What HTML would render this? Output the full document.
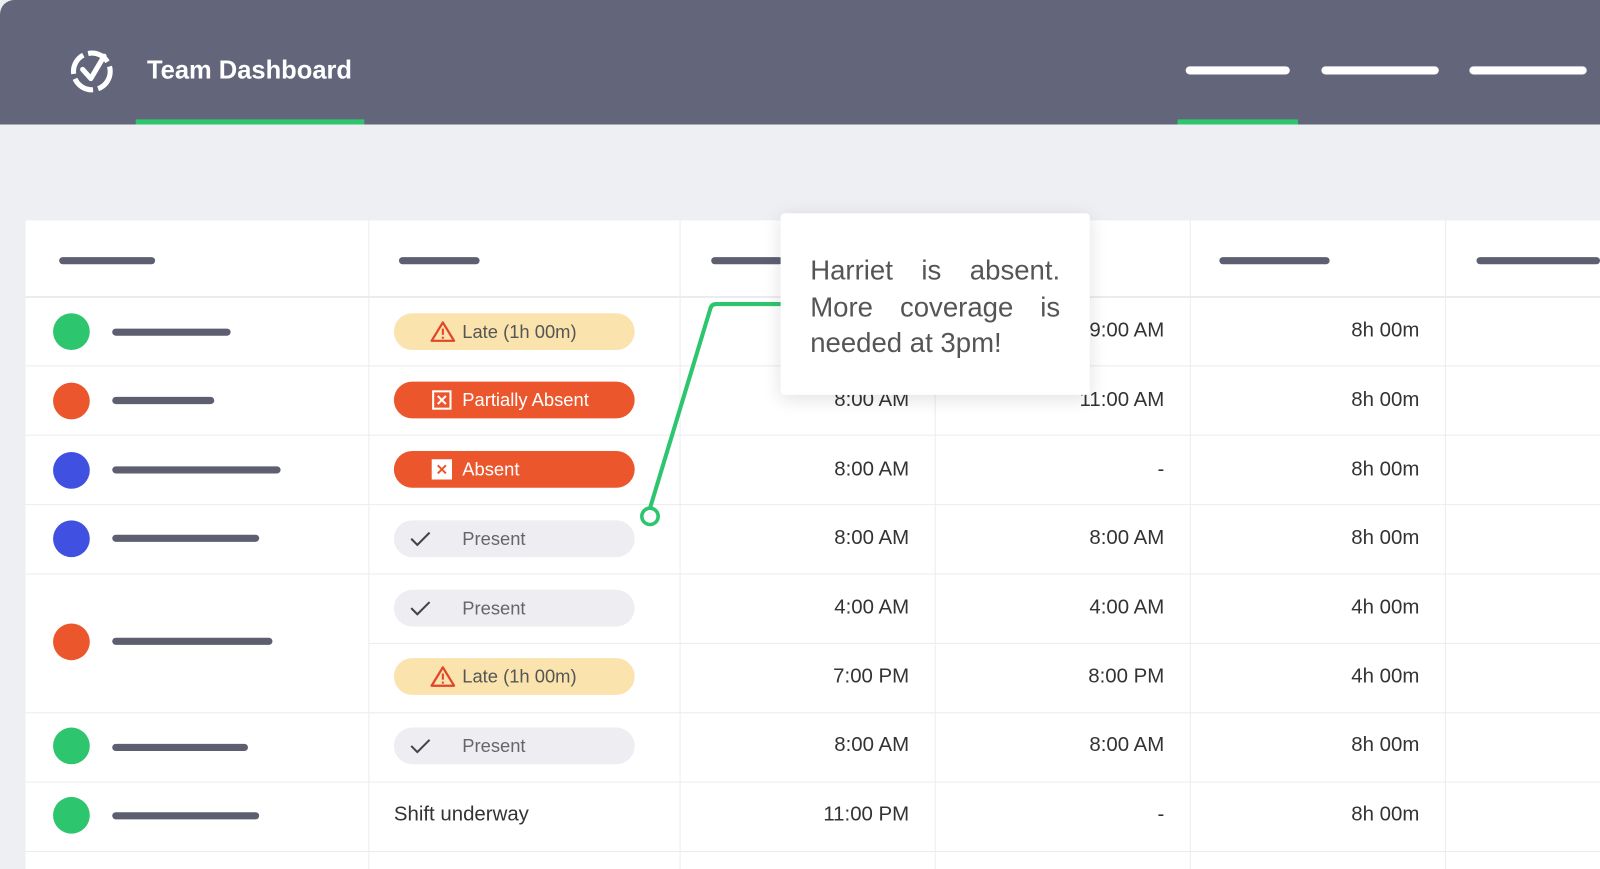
<!DOCTYPE html>
<html><head><meta charset="utf-8"><style>
*{margin:0;padding:0;box-sizing:border-box}
body{width:1600px;height:852px;overflow:hidden;background:#eeeff3;font-family:"Liberation Sans",sans-serif;position:relative}
#w{position:absolute;left:0;top:0;width:1568px;height:835px;transform:scale(1.0204);transform-origin:0 0}
.a{position:absolute}
.hdr{left:0;top:0;width:1600px;height:122px;background:#63657a;border-top-left-radius:14px}
.bar{position:absolute;height:8px;border-radius:4px;background:#fff}
.tb{left:25px;top:216px;width:1575px;height:636px;background:#fff}
.vl{position:absolute;width:1px;background:#ececef}
.hl{position:absolute;height:1px;background:#ececef}
.hb{position:absolute;height:7px;border-radius:4px;background:#5d5e70;top:252px}
.dot{position:absolute;width:36px;height:36px;border-radius:50%;left:52px}
.nb{position:absolute;height:7px;border-radius:4px;background:#5d5e70;left:110px}
.pill{position:absolute;left:386px;width:236px;height:36px;border-radius:18px;font-size:18px;line-height:36px;color:#555}
.late{background:#fbe3ad}
.red{background:#ec562d;color:#fff}
.pres{background:#eeeef2;color:#666}
.t{position:absolute;font-size:20px;color:#333;text-align:right;width:200px}
</style></head><body><div id="w">
<div class="a hdr">
  <svg class="a" style="left:66px;top:45px" width="48" height="48" viewBox="0 0 48 48"><circle cx="24" cy="25" r="18" fill="none" stroke="#fff" stroke-width="5" stroke-dasharray="22 5"/><path d="M15 23l8 9 13-22" fill="none" stroke="#fff" stroke-width="5" stroke-linecap="round" stroke-linejoin="round"/></svg>
  <div class="a" style="left:144px;top:55px;color:#fff;font-size:25px;font-weight:bold">Team Dashboard</div>
  <div class="a" style="left:133px;top:117px;width:224px;height:5px;background:#2ec56f"></div>
  <div class="bar" style="left:1162px;top:65px;width:102px"></div>
  <div class="bar" style="left:1295px;top:65px;width:115px"></div>
  <div class="bar" style="left:1440px;top:65px;width:115px"></div>
  <div class="a" style="left:1154px;top:117px;width:118px;height:5px;background:#2ec56f"></div>
</div>
<div class="a tb"></div>
<div class="vl" style="left:361px;top:216px;height:636px"></div>
<div class="vl" style="left:666px;top:216px;height:636px"></div>
<div class="vl" style="left:916px;top:216px;height:636px"></div>
<div class="vl" style="left:1166px;top:216px;height:636px"></div>
<div class="vl" style="left:1416px;top:216px;height:636px"></div>
<div class="hl" style="left:25px;top:290px;width:1575px;height:2px"></div>
<div class="hl" style="left:25px;top:358px;width:1575px"></div>
<div class="hl" style="left:25px;top:426px;width:1575px"></div>
<div class="hl" style="left:25px;top:494px;width:1575px"></div>
<div class="hl" style="left:25px;top:562px;width:1575px"></div>
<div class="hl" style="left:361px;top:630px;width:1239px"></div>
<div class="hl" style="left:25px;top:698px;width:1575px"></div>
<div class="hl" style="left:25px;top:766px;width:1575px"></div>
<div class="hl" style="left:25px;top:834px;width:1575px"></div>
<div class="hb" style="left:58px;width:94px"></div>
<div class="hb" style="left:391px;width:79px"></div>
<div class="hb" style="left:697px;width:70px"></div>
<div class="hb" style="left:1195px;width:108px"></div>
<div class="hb" style="left:1447px;width:121px"></div>

<div class="dot" style="top:307px;background:#2ec56f"></div><div class="nb" style="top:322px;width:116px"></div>
<div class="dot" style="top:375px;background:#ec562d"></div><div class="nb" style="top:389px;width:100px"></div>
<div class="dot" style="top:443px;background:#4050e0"></div><div class="nb" style="top:457px;width:165px"></div>
<div class="dot" style="top:510px;background:#4050e0"></div><div class="nb" style="top:524px;width:144px"></div>
<div class="dot" style="top:611px;background:#ec562d"></div><div class="nb" style="top:625px;width:157px"></div>
<div class="dot" style="top:713px;background:#2ec56f"></div><div class="nb" style="top:729px;width:133px"></div>
<div class="dot" style="top:781px;background:#2ec56f"></div><div class="nb" style="top:796px;width:144px"></div>

<div class="pill late" style="top:307px"><svg class="a" style="left:35px;top:7px" width="26" height="22" viewBox="0 0 26 22"><path d="M13 2L24 20H2Z" fill="none" stroke="#e0452a" stroke-width="2.2" stroke-linejoin="round"/><path d="M13 8v6M13 16v2" stroke="#e0452a" stroke-width="2"/></svg><span class="a" style="left:67px">Late (1h 00m)</span></div>
<div class="pill red" style="top:374px"><svg class="a" style="left:37px;top:8px" width="20" height="20" viewBox="0 0 20 20"><rect x="1.5" y="1.5" width="17" height="17" fill="none" stroke="#fff" stroke-width="2"/><path d="M6 6l8 8M14 6l-8 8" stroke="#fff" stroke-width="2"/></svg><span class="a" style="left:67px">Partially Absent</span></div>
<div class="pill red" style="top:442px"><svg class="a" style="left:37px;top:8px" width="20" height="20" viewBox="0 0 20 20"><rect x="0" y="0" width="20" height="20" fill="#fff"/><path d="M6 6l8 8M14 6l-8 8" stroke="#ec562d" stroke-width="2"/></svg><span class="a" style="left:67px">Absent</span></div>
<div class="pill pres" style="top:510px"><svg class="a" style="left:15px;top:9px" width="22" height="18" viewBox="0 0 22 18"><path d="M2 9l6 6L20 3" fill="none" stroke="#444" stroke-width="2"/></svg><span class="a" style="left:67px">Present</span></div>
<div class="pill pres" style="top:578px"><svg class="a" style="left:15px;top:9px" width="22" height="18" viewBox="0 0 22 18"><path d="M2 9l6 6L20 3" fill="none" stroke="#444" stroke-width="2"/></svg><span class="a" style="left:67px">Present</span></div>
<div class="pill late" style="top:645px"><svg class="a" style="left:35px;top:7px" width="26" height="22" viewBox="0 0 26 22"><path d="M13 2L24 20H2Z" fill="none" stroke="#e0452a" stroke-width="2.2" stroke-linejoin="round"/><path d="M13 8v6M13 16v2" stroke="#e0452a" stroke-width="2"/></svg><span class="a" style="left:67px">Late (1h 00m)</span></div>
<div class="pill pres" style="top:713px"><svg class="a" style="left:15px;top:9px" width="22" height="18" viewBox="0 0 22 18"><path d="M2 9l6 6L20 3" fill="none" stroke="#444" stroke-width="2"/></svg><span class="a" style="left:67px">Present</span></div>
<div class="a" style="left:386px;top:787px;font-size:20px;color:#333">Shift underway</div>

<div class="t" style="left:941px;top:313px">9:00 AM</div><div class="t" style="left:1191px;top:313px">8h 00m</div>
<div class="t" style="left:691px;top:381px">8:00 AM</div><div class="t" style="left:941px;top:381px">11:00 AM</div><div class="t" style="left:1191px;top:381px">8h 00m</div>
<div class="t" style="left:691px;top:449px">8:00 AM</div><div class="t" style="left:941px;top:449px">-</div><div class="t" style="left:1191px;top:449px">8h 00m</div>
<div class="t" style="left:691px;top:516px">8:00 AM</div><div class="t" style="left:941px;top:516px">8:00 AM</div><div class="t" style="left:1191px;top:516px">8h 00m</div>
<div class="t" style="left:691px;top:584px">4:00 AM</div><div class="t" style="left:941px;top:584px">4:00 AM</div><div class="t" style="left:1191px;top:584px">4h 00m</div>
<div class="t" style="left:691px;top:652px">7:00 PM</div><div class="t" style="left:941px;top:652px">8:00 PM</div><div class="t" style="left:1191px;top:652px">4h 00m</div>
<div class="t" style="left:691px;top:719px">8:00 AM</div><div class="t" style="left:941px;top:719px">8:00 AM</div><div class="t" style="left:1191px;top:719px">8h 00m</div>
<div class="t" style="left:691px;top:787px">11:00 PM</div><div class="t" style="left:941px;top:787px">-</div><div class="t" style="left:1191px;top:787px">8h 00m</div>

<svg class="a" style="left:0;top:0" width="1600" height="852"><path d="M770 298H702Q697 298 696 303L637 498" fill="none" stroke="#2ec56f" stroke-width="4"/><circle cx="637" cy="506" r="8" fill="#fff" stroke="#2ec56f" stroke-width="3.5"/></svg>
<div class="a" style="left:765px;top:209px;width:303px;height:178px;background:#fff;border-radius:4px;box-shadow:0 4px 18px rgba(0,0,0,.12)"></div>
<div class="a" style="left:794px;top:248px;width:245px;font-size:27px;line-height:35.5px;color:#555;text-align:justify;text-align-last:left">Harriet is absent. More coverage is needed at 3pm!</div>
</div></body></html>
